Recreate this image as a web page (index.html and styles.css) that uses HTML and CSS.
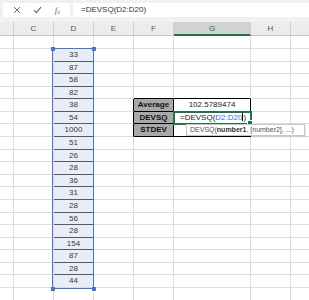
FILE: index.html
```html
<!DOCTYPE html>
<html>
<head>
<meta charset="utf-8">
<link rel="stylesheet" href="styles.css">
</head>
<body>
<div class="bar">
  <div class="icons">
    <svg class="ic" width="8" height="8" viewBox="0 0 8 8"><path d="M1 1L7 7M7 1L1 7" stroke="#6d6d6d" stroke-width="1" fill="none"/></svg>
    <svg class="ic" width="9" height="8" viewBox="0 0 9 8"><path d="M1 4.2L3.4 6.6L8 1.2" stroke="#6d6d6d" stroke-width="1.2" fill="none"/></svg>
    <span class="fx">f<sub>x</sub></span>
  </div>
  <div class="fbox">=DEVSQ(D2:D20)</div>
</div>
<div class="sheet">
  <div class="row hdr"><div class="c c0"></div><div class="c w">C</div><div class="c w">D</div><div class="c w">E</div><div class="c w">F</div><div class="c g act">G</div><div class="c w">H</div><div class="c r"></div></div>
  <div class="row first"><div class="c c0"></div><div class="c w"></div><div class="c w"></div><div class="c w"></div><div class="c w"></div><div class="c g"></div><div class="c w"></div><div class="c r"></div></div>
  <div class="row"><div class="c c0"></div><div class="c w"></div><div class="c w d">33</div><div class="c w"></div><div class="c w"></div><div class="c g"></div><div class="c w"></div><div class="c r"></div></div>
  <div class="row"><div class="c c0"></div><div class="c w"></div><div class="c w d">87</div><div class="c w"></div><div class="c w"></div><div class="c g"></div><div class="c w"></div><div class="c r"></div></div>
  <div class="row"><div class="c c0"></div><div class="c w"></div><div class="c w d">58</div><div class="c w"></div><div class="c w"></div><div class="c g"></div><div class="c w"></div><div class="c r"></div></div>
  <div class="row"><div class="c c0"></div><div class="c w"></div><div class="c w d">82</div><div class="c w"></div><div class="c w tb"></div><div class="c g tb"></div><div class="c w"></div><div class="c r"></div></div>
  <div class="row"><div class="c c0"></div><div class="c w"></div><div class="c w d">38</div><div class="c w lr"></div><div class="c w lbl">Average</div><div class="c g val">102.5789474</div><div class="c w"></div><div class="c r"></div></div>
  <div class="row"><div class="c c0"></div><div class="c w"></div><div class="c w d">54</div><div class="c w lr"></div><div class="c w lbl">DEVSQ</div><div class="c g val edit">=DEVSQ(<span class="ref">D2:D20</span><span class="caret"></span>)</div><div class="c w"></div><div class="c r"></div></div>
  <div class="row"><div class="c c0"></div><div class="c w"></div><div class="c w d">1000</div><div class="c w lr"></div><div class="c w lbl">STDEV</div><div class="c g val tipcell"><div class="tip">DEVSQ(<b>number1</b>, [number2], ...)</div></div><div class="c w"></div><div class="c r"></div></div>
  <div class="row"><div class="c c0"></div><div class="c w"></div><div class="c w d">51</div><div class="c w"></div><div class="c w"></div><div class="c g"></div><div class="c w"></div><div class="c r"></div></div>
  <div class="row"><div class="c c0"></div><div class="c w"></div><div class="c w d">26</div><div class="c w"></div><div class="c w"></div><div class="c g"></div><div class="c w"></div><div class="c r"></div></div>
  <div class="row"><div class="c c0"></div><div class="c w"></div><div class="c w d">28</div><div class="c w"></div><div class="c w"></div><div class="c g"></div><div class="c w"></div><div class="c r"></div></div>
  <div class="row"><div class="c c0"></div><div class="c w"></div><div class="c w d">36</div><div class="c w"></div><div class="c w"></div><div class="c g"></div><div class="c w"></div><div class="c r"></div></div>
  <div class="row"><div class="c c0"></div><div class="c w"></div><div class="c w d">31</div><div class="c w"></div><div class="c w"></div><div class="c g"></div><div class="c w"></div><div class="c r"></div></div>
  <div class="row"><div class="c c0"></div><div class="c w"></div><div class="c w d">28</div><div class="c w"></div><div class="c w"></div><div class="c g"></div><div class="c w"></div><div class="c r"></div></div>
  <div class="row"><div class="c c0"></div><div class="c w"></div><div class="c w d">56</div><div class="c w"></div><div class="c w"></div><div class="c g"></div><div class="c w"></div><div class="c r"></div></div>
  <div class="row"><div class="c c0"></div><div class="c w"></div><div class="c w d">28</div><div class="c w"></div><div class="c w"></div><div class="c g"></div><div class="c w"></div><div class="c r"></div></div>
  <div class="row"><div class="c c0"></div><div class="c w"></div><div class="c w d">154</div><div class="c w"></div><div class="c w"></div><div class="c g"></div><div class="c w"></div><div class="c r"></div></div>
  <div class="row"><div class="c c0"></div><div class="c w"></div><div class="c w d">87</div><div class="c w"></div><div class="c w"></div><div class="c g"></div><div class="c w"></div><div class="c r"></div></div>
  <div class="row"><div class="c c0"></div><div class="c w"></div><div class="c w d">28</div><div class="c w"></div><div class="c w"></div><div class="c g"></div><div class="c w"></div><div class="c r"></div></div>
  <div class="row"><div class="c c0"></div><div class="c w"></div><div class="c w d last">44</div><div class="c w"></div><div class="c w"></div><div class="c g"></div><div class="c w"></div><div class="c r"></div></div>
  <div class="row"><div class="c c0"></div><div class="c w"></div><div class="c w"></div><div class="c w"></div><div class="c w"></div><div class="c g"></div><div class="c w"></div><div class="c r"></div></div>
  <div class="sel"><i class="h tl"></i><i class="h tr"></i><i class="h bl"></i><i class="h br"></i></div>
</div>
</body>
</html>
```

FILE: styles.css
```css
* { box-sizing: border-box; }
body {
  margin: 0;
  width: 309px;
  height: 300px;
  overflow: hidden;
  background: #fff;
  font-family: "Liberation Sans", Arial, sans-serif;
  font-size: 8px;
  color: #333;
}
.bar {
  height: 22px;
  background: #f1f1f1;
  display: flex;
  gap: 3px;
  padding: 3px 0 5px 3px;
}
.icons {
  width: 67px;
  background: #fff;
  display: flex;
  align-items: center;
  justify-content: space-around;
  padding: 0 4px;
}
.fx {
  font-family: "Liberation Serif", serif;
  font-style: italic;
  font-size: 9px;
  color: #6d6d6d;
  line-height: 1;
}
.fx sub { font-size: 6px; vertical-align: -1px; }
.fbox {
  flex: 1;
  background: #fff;
  padding-left: 8px;
  line-height: 14px;
  color: #333;
}
.sheet { position: relative; }
.row { display: flex; height: 12.58px; }
.row.hdr { height: 14px; background: #ececec; }
.row.first { height: 13px; }
.c {
  flex: none;
  border-right: 1px solid #dcdcdc;
  border-bottom: 1px solid #dcdcdc;
  text-align: center;
  line-height: 11.5px;
  white-space: nowrap;
}
.c0 { width: 14px; }
.w { width: 40px; }
.g { width: 77px; }
.r { flex: 1; border-right: none; }
.hdr .c {
  line-height: 13px;
  color: #555;
  border-right-color: #cfcfcf;
  border-bottom-color: #c4c4c4;
}
.hdr .act {
  background: #d2d2d2;
  color: #217346;
  border-bottom: 2px solid #217346;
}
.d {
  background: #e8edf7;
  border-bottom: 1.5px solid #5a5a5a;
  color: #3a3a3a;
}
.d.last { border-bottom-color: #dcdcdc; }
.tb { border-bottom-color: #000; }
.lr { border-right-color: #000; }
.lbl {
  background: #a9a9a9;
  font-weight: bold;
  color: #111;
  border-right-color: #000;
  border-bottom-color: #000;
}
.val {
  border-right-color: #000;
  border-bottom-color: #000;
  color: #222;
}
.edit {
  position: relative;
  text-align: left;
  padding-left: 6px;
  outline: 2px solid #217346;
  outline-offset: -1px;
  z-index: 2;
}
.edit::after {
  content: "";
  position: absolute;
  right: -3px;
  bottom: -3px;
  width: 4px;
  height: 4px;
  background: #217346;
  border: 1px solid #fff;
}
.ref { color: #3b6fd0; }
.caret {
  display: inline-block;
  width: 1px;
  height: 9px;
  background: #000;
  vertical-align: -1px;
}
.tipcell { position: relative; }
.tip {
  position: absolute;
  left: 12px;
  top: 0;
  width: 119px;
  height: 12px;
  background: #fff;
  border: 1px solid #c6c6c6;
  font-size: 7px;
  line-height: 10px;
  color: #555;
  text-align: left;
  padding-left: 3px;
  white-space: nowrap;
  z-index: 3;
  box-shadow: 1px 1px 1px rgba(0,0,0,0.08);
}
.tip b { color: #333; }
.sel {
  position: absolute;
  left: 52px;
  top: 26px;
  width: 42px;
  height: 241px;
  border: 1.5px solid #4677d0;
  z-index: 1;
}
.h {
  position: absolute;
  width: 4px;
  height: 4px;
  background: #4677d0;
}
.tl { left: -2.5px; top: -2.5px; }
.tr { right: -2.5px; top: -2.5px; }
.bl { left: -2.5px; bottom: -2.5px; }
.br { right: -2.5px; bottom: -2.5px; }
```
